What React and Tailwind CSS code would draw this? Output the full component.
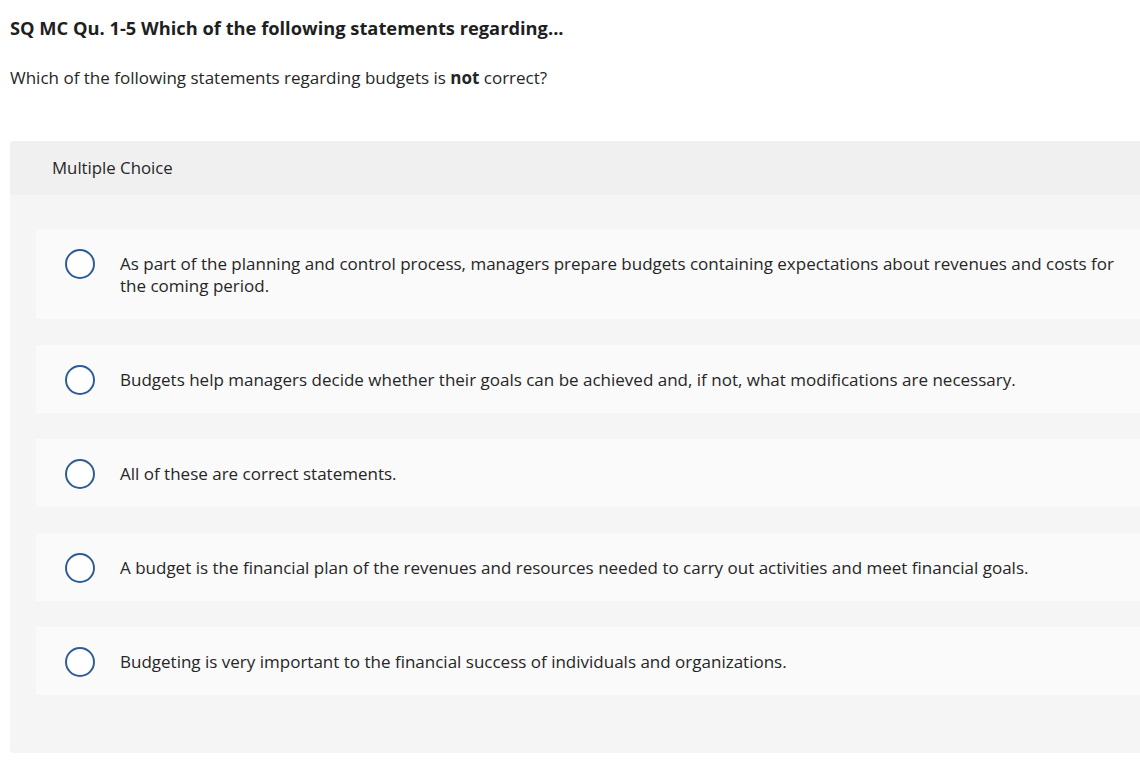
import React from 'react';

const choices = [
  'As part of the planning and control process, managers prepare budgets containing expectations about revenues and costs for the coming period.',
  'Budgets help managers decide whether their goals can be achieved and, if not, what modifications are necessary.',
  'All of these are correct statements.',
  'A budget is the financial plan of the revenues and resources needed to carry out activities and meet financial goals.',
  'Budgeting is very important to the financial success of individuals and organizations.',
];

const Choice = ({ text }) => (
  <div className="flex items-start bg-[#fafafa] py-[23px]">
    <div className="w-[84px] shrink-0 flex justify-center pl-[4px] -mt-[3px] -mb-[5px]">
      <span className="block w-[30px] h-[30px] rounded-full border-2 border-[#2f5c94] bg-white" />
    </div>
    <p className="text-[17px] leading-[22px] text-[#262626] pr-[26px] pt-px -mb-px">{text}</p>
  </div>
);

const App = () => {
  return (
    <div className="w-[1140px] min-h-[772px] bg-white overflow-hidden font-['Open_Sans','Lato',sans-serif] text-[#262626]">
      <h1 className="pl-[10px] pt-[16px] text-[18.3px] leading-[24px] font-bold text-[#1f1f1f]">
        SQ MC Qu. 1-5 Which of the following statements regarding...
      </h1>
      <p className="pl-[10px] mt-[27px] text-[17px] leading-[22px]">
        Which of the following statements regarding budgets is <b>not</b> correct?
      </p>

      <div className="ml-[10px] mt-[52px] rounded-l-[3px] overflow-hidden">
        <div className="h-[54px] bg-[#f0f0f0] flex items-center pl-[42px] text-[16.8px]">
          Multiple Choice
        </div>
        <div className="bg-[#f5f5f5] pl-[26px] pt-[34px] pb-[58px] flex flex-col gap-[26px]">
          {choices.map((c, i) => (
            <Choice key={i} text={c} />
          ))}
        </div>
      </div>
    </div>
  );
};

export default App;
